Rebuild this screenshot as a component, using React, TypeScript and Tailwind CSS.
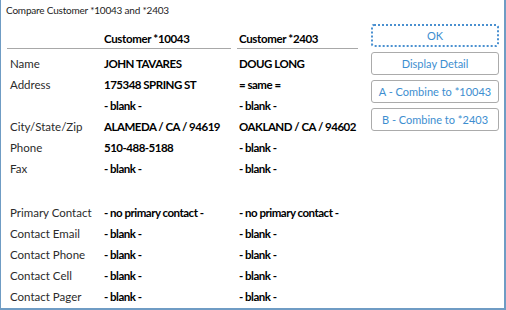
const rows: { label: string; a: string; b: string }[] = [
  { label: "Name", a: "JOHN TAVARES", b: "DOUG LONG" },
  { label: "Address", a: "175348 SPRING ST", b: "= same =" },
  { label: "", a: "- blank -", b: "- blank -" },
  { label: "City/State/Zip", a: "ALAMEDA / CA / 94619", b: "OAKLAND / CA / 94602" },
  { label: "Phone", a: "510-488-5188", b: "- blank -" },
  { label: "Fax", a: "- blank -", b: "- blank -" },
];

const contactRows = [
  { label: "Primary Contact", a: "- no primary contact -", b: "- no primary contact -" },
  { label: "Contact Email", a: "- blank -", b: "- blank -" },
  { label: "Contact Phone", a: "- blank -", b: "- blank -" },
  { label: "Contact Cell", a: "- blank -", b: "- blank -" },
  { label: "Contact Pager", a: "- blank -", b: "- blank -" },
];

const buttons = ["Display Detail", "A - Combine to *10043", "B - Combine to *2403"];

function Row({ label, a, b }: { label: string; a: string; b: string }) {
  return (
    <div className="flex h-[21px] items-center whitespace-nowrap text-[11.5px]">
      <div className="w-[97px] pl-[3px] text-[#2b2b2b]">{label}</div>
      <div className="w-[135px] font-bold text-black tracking-[-0.5px]">{a}</div>
      <div className="font-bold text-black tracking-[-0.5px]">{b}</div>
    </div>
  );
}

export default function App() {
  return (
    <div
      className="w-[506px] h-[310px] bg-white border-l border-r-2 border-b-2 border-[#6f9cc4] text-[11px] leading-none overflow-hidden"
      style={{ fontFamily: "Lato, 'Noto Sans', sans-serif" }}
    >
      <div className="pl-[5px] pt-[5px] text-[10px] tracking-[-0.2px] text-[#222]">Compare Customer *10043 and *2403</div>
      <div className="flex">
        <div className="pl-[6px] pt-[14px] w-[360px]">
          <div className="flex h-[20px] items-center font-bold text-black whitespace-nowrap text-[11.5px] tracking-[-0.35px]">
            <div className="w-[224px] border-b border-[#a8a8a8] h-full flex items-center pl-[97px]">Customer *10043</div>
            <div className="w-[121px] ml-[6px] border-b border-[#a8a8a8] h-full flex items-center pl-[2px]">Customer *2403</div>
          </div>
          <div className="pt-[4px]">
            {rows.map((r, i) => (
              <Row key={i} {...r} />
            ))}
            <div className="h-[23px]" />
            {contactRows.map((r, i) => (
              <Row key={i} {...r} />
            ))}
          </div>
        </div>
        <div className="flex flex-col gap-[5px] pt-[9px] pl-[10px]">
          <button className="w-[128px] h-[23px] rounded-[3px] border-2 border-dotted border-[#4a90d0] text-[#3d8ed0] bg-white">
            OK
          </button>
          {buttons.map((t) => (
            <button
              key={t}
              className="w-[128px] h-[23px] rounded-[3px] border border-[#ababab] text-[#3d8ed0] bg-white whitespace-nowrap"
            >
              {t}
            </button>
          ))}
        </div>
      </div>
    </div>
  );
}
